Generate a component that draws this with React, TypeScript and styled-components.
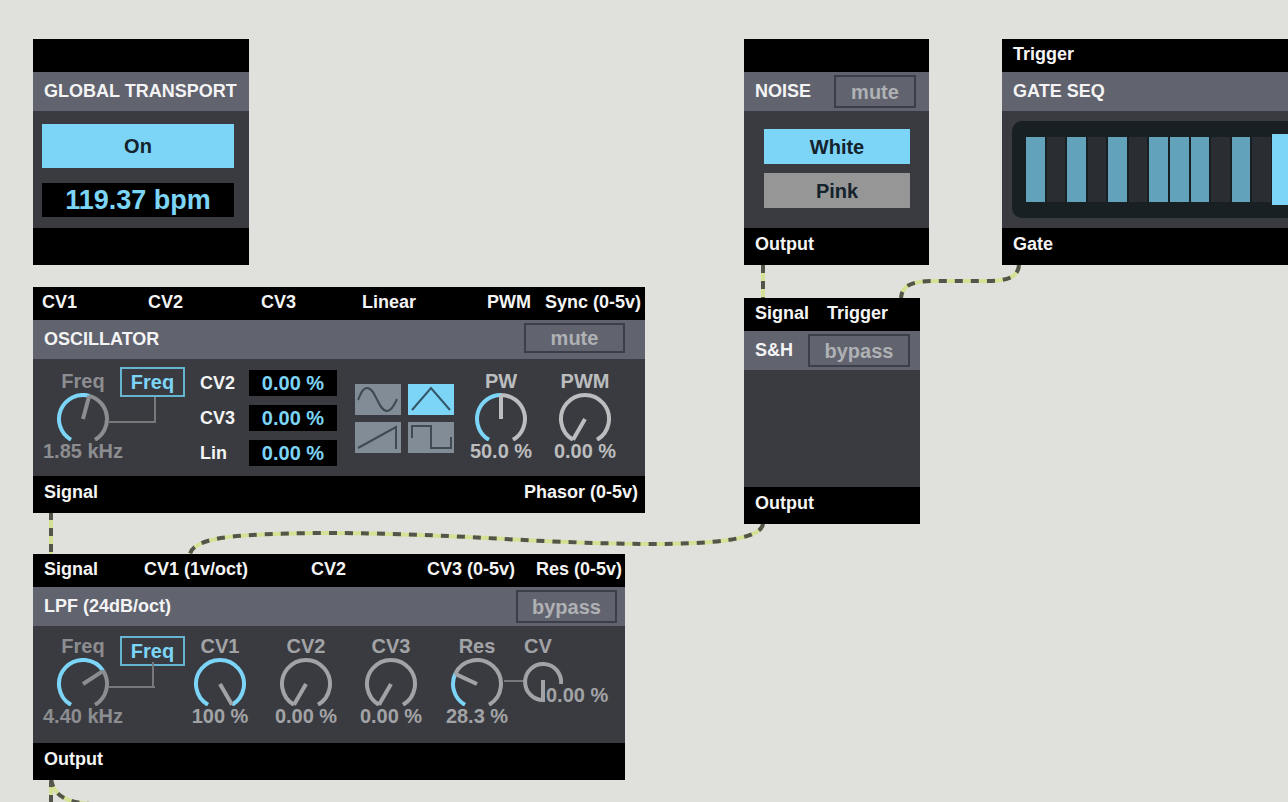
import React, { useId, useState } from 'react';
import styled, { createGlobalStyle } from 'styled-components';

const color = {
  canvas: '#e0e1dc',
  black: '#000000',
  title: '#61636f',
  body: '#3a3b40',
  accent: '#7cd4f6',
  white: '#f4f4f4',
  outline: '#3c3e4a',
  buttonText: '#afb1b4',
};

const GlobalStyle = createGlobalStyle`
  *, *::before, *::after { box-sizing: border-box; }
  body {
    margin: 0;
    background: ${color.canvas};
    font-family: "Liberation Sans", Arial, Helvetica, sans-serif;
    font-weight: 700;
    font-size: 18px;
  }
  button, input { font: inherit; margin: 0; padding: 0; border-radius: 0; }
  button { cursor: pointer; }
`;

/* ---------- canvas and modules ---------- */

const Canvas = styled.main`
  position: relative;
  min-height: 100vh;
  overflow: hidden;
  background: ${color.canvas};
`;

const Cables = styled.svg`
  position: absolute;
  inset: 0;
  width: 100%;
  height: 100%;
  fill: none;
`;

const Module = styled.section<{ $x: number; $y: number; $width: number }>`
  position: absolute;
  left: ${(p) => p.$x}px;
  top: ${(p) => p.$y}px;
  width: ${(p) => p.$width}px;
  display: grid;
  grid-template-rows: 33px 39px 117px 37px;
  background: ${color.body};
  color: ${color.white};
`;

const Inputs = styled.header<{ $columns?: string; $inset?: number }>`
  display: grid;
  grid-template-columns: ${(p) => p.$columns ?? 'auto'};
  padding-left: ${(p) => p.$inset ?? 11}px;
  background: ${color.black};
  line-height: 31px;
  white-space: nowrap;
`;

const Outputs = styled.footer`
  display: flex;
  justify-content: space-between;
  padding: 0 7px 0 11px;
  background: ${color.black};
  line-height: 32px;
  white-space: nowrap;
`;

const TitleBar = styled.div<{ $end?: number }>`
  display: flex;
  justify-content: space-between;
  padding: 3px ${(p) => p.$end ?? 8}px 0 11px;
  background: ${color.title};
`;

const Title = styled.h2`
  margin: 0;
  font-size: 18px;
  line-height: 33px;
  white-space: nowrap;
`;

const TitleButton = styled.button<{ $width: number; $height?: number }>`
  width: ${(p) => p.$width}px;
  height: ${(p) => p.$height ?? 33}px;
  border: 2px solid ${color.outline};
  background: transparent;
  color: ${color.buttonText};
  font-size: 20px;
  line-height: 20px;
`;

const StackBody = styled.div<{ $pad: string; $gap: number }>`
  display: flex;
  flex-direction: column;
  gap: ${(p) => p.$gap}px;
  padding: ${(p) => p.$pad};
`;

const ControlBody = styled.div<{ $columns: string }>`
  display: grid;
  grid-template-columns: ${(p) => p.$columns};
  align-items: start;
  padding: 8px 0 0 23px;
`;

const FlatButton = styled.button<{ $on?: boolean; $height: number }>`
  height: ${(p) => p.$height}px;
  border: 0;
  background: ${(p) => (p.$on ? color.accent : '#969696')};
  color: #14222c;
  font-size: 20px;
  line-height: 20px;
`;

const TempoField = styled.input`
  width: 100%;
  height: 34px;
  border: 0;
  background: ${color.black};
  color: ${color.accent};
  font-size: 27px;
  text-align: center;
`;

/* ---------- knobs ---------- */

const KnobCell = styled.div<{ $drop: number; $tone: string }>`
  display: flex;
  flex-direction: column;
  align-items: center;
  width: 54px;
  padding-top: ${(p) => p.$drop}px;
  color: ${(p) => p.$tone};
  font-size: 20px;
  line-height: 20px;
  white-space: nowrap;
`;

const Dial = styled.div`
  position: relative;
  height: 48px;
  margin-top: 2px;
`;

const DialDrawing = styled.svg`
  display: block;
  fill: none;
  stroke-width: 4;
`;

const DialInput = styled.input`
  position: absolute;
  inset: 0;
  width: 100%;
  height: 100%;
  opacity: 0;
`;

function arc(cx: number, cy: number, r: number, from: number, to: number) {
  const at = (deg: number) => {
    const a = (deg * Math.PI) / 180;
    return `${cx + r * Math.sin(a)} ${cy - r * Math.cos(a)}`;
  };
  const large = to - from > 180 ? 1 : 0;
  return `M${at(from)} A${r} ${r} 0 ${large} 1 ${at(to)}`;
}

type KnobProps = { name: string; text: string; value: number; drop: number; tone: string };

function Knob({ name, text, value, drop, tone }: KnobProps) {
  const id = useId();
  const [level, setLevel] = useState(value);
  const angle = -150 + 300 * level;
  const rad = (angle * Math.PI) / 180;
  return (
    <KnobCell $drop={drop} $tone={tone}>
      <label htmlFor={id}>{name}</label>
      <Dial>
        <DialDrawing width="54" height="48" viewBox="0 0 54 48" stroke={tone} aria-hidden="true">
          <path d={arc(27, 26, 24, angle, 150)} />
          {level > 0 && <path d={arc(27, 26, 24, -150, angle)} stroke={color.accent} />}
          <path d={`M27 26 L${27 + 24 * Math.sin(rad)} ${26 - 24 * Math.cos(rad)}`} />
        </DialDrawing>
        <DialInput
          id={id}
          type="range"
          min={0}
          max={1}
          step={0.001}
          value={level}
          onChange={(e) => setLevel(Number(e.target.value))}
        />
      </Dial>
      <output htmlFor={id}>{text}</output>
    </KnobCell>
  );
}

const LinkCell = styled.div<{ $drop: number }>`
  width: 75px;
  padding-top: ${(p) => p.$drop}px;
`;

const LinkButton = styled.button`
  display: block;
  width: 65px;
  height: 30px;
  margin-left: auto;
  border: 2px solid #64b4d2;
  background: transparent;
  color: ${color.accent};
  font-size: 20px;
  line-height: 20px;
`;

const LinkLine = styled.svg`
  display: block;
  fill: none;
  stroke: #77787c;
  stroke-width: 2;
  overflow: visible;
`;

const SmallKnobCell = styled.div<{ $tone: string }>`
  position: relative;
  padding-top: 2px;
  color: ${(p) => p.$tone};
  font-size: 20px;
  line-height: 20px;
  white-space: nowrap;
`;

const SmallKnobName = styled.label`
  display: block;
  padding-left: 20px;
`;

const SmallKnobValue = styled.output`
  position: absolute;
  left: 42px;
  top: 51px;
`;

/* ---------- oscillator ---------- */

const AmountGrid = styled.div`
  display: grid;
  grid-template-columns: 49px 88px;
  row-gap: 9px;
  padding-top: 3px;
  line-height: 26px;
`;

const AmountField = styled.input`
  width: 88px;
  height: 26px;
  border: 0;
  background: ${color.black};
  color: ${color.accent};
  font-size: 20px;
  text-align: center;
`;

const WaveGrid = styled.div`
  display: grid;
  grid-template-columns: 46px 46px;
  gap: 7px;
  padding-top: 17px;
`;

const WaveButton = styled.button<{ $on: boolean }>`
  height: 31px;
  border: 0;
  background: ${(p) => (p.$on ? color.accent : '#818c96')};
  svg {
    display: block;
    fill: none;
    stroke: ${(p) => (p.$on ? '#335668' : '#3f4a52')};
    stroke-width: 2;
  }
`;

const waves = [
  { name: 'Sine', d: 'M3 16 C6 9 8 4 12 4 C21 4 23 27 32 27 C36 27 39 22 42 15' },
  { name: 'Triangle', d: 'M4 26 L23 4 L42 26' },
  { name: 'Saw', d: 'M3 26 L41 5 V27' },
  { name: 'Square', d: 'M4 16 V4 H23 V26 H43 V15' },
];

function AmountRow({ name }: { name: string }) {
  const id = useId();
  return (
    <>
      <label htmlFor={id}>{name}</label>
      <AmountField id={id} defaultValue="0.00 %" />
    </>
  );
}

/* ---------- gate sequencer ---------- */

const StepPanel = styled.div`
  display: grid;
  grid-template-columns: repeat(16, 1fr);
  column-gap: 2px;
  height: 97px;
  margin: 10px 11px 0 10px;
  padding: 16px 14px;
  border-radius: 10px;
  background: #192024;
`;

const Step = styled.input<{ $current: boolean }>`
  appearance: none;
  margin: ${(p) => (p.$current ? '-3px -1px' : '0')};
  background: #2a2d32;
  &:checked {
    background: ${(p) => (p.$current ? color.accent : '#62a3bb')};
  }
`;

const activeSteps = [0, 2, 4, 6, 7, 8, 10, 12];
const currentStep = 12;

/* ---------- cables ---------- */

const cablePaths = [
  'M51 512 V554',
  'M763 265 V298',
  'M763 524 C761 540 710 544 650 544 C520 543 460 533 320 533 C230 534 194 538 190 554',
  'M1019 265 C1018 279 1004 281 985 281 H935 C912 281 902 285 901 298',
  'M51 779 V810',
  'M51 779 C54 796 66 802 90 804 H255',
];

const tones = { dim: '#8c8d90', mid: '#a2a3a6', bright: '#bcbdbf' };

export default function App() {
  const [wave, setWave] = useState('Triangle');
  const [noise, setNoise] = useState('White');

  return (
    <>
      <GlobalStyle />
      <Canvas>
        <Cables aria-hidden="true">
          {cablePaths.map((d) => (
            <g key={d}>
              <path d={d} stroke="#d5e296" strokeWidth="4" />
              <path d={d} stroke="#53554a" strokeWidth="4" strokeDasharray="8 8" />
            </g>
          ))}
        </Cables>

        <Module $x={33} $y={39} $width={216}>
          <Inputs />
          <TitleBar>
            <Title>GLOBAL TRANSPORT</Title>
          </TitleBar>
          <StackBody $pad="13px 15px 0 9px" $gap={15}>
            <FlatButton $on $height={44}>On</FlatButton>
            <TempoField aria-label="Tempo" defaultValue="119.37 bpm" />
          </StackBody>
          <Outputs />
        </Module>

        <Module $x={744} $y={39} $width={185}>
          <Inputs />
          <TitleBar $end={13}>
            <Title>NOISE</Title>
            <TitleButton $width={82}>mute</TitleButton>
          </TitleBar>
          <StackBody $pad="18px 19px 0 20px" $gap={9}>
            {['White', 'Pink'].map((n) => (
              <FlatButton key={n} $on={noise === n} $height={35} onClick={() => setNoise(n)}>
                {n}
              </FlatButton>
            ))}
          </StackBody>
          <Outputs>
            <span>Output</span>
          </Outputs>
        </Module>

        <Module $x={1002} $y={39} $width={376}>
          <Inputs>
            <span>Trigger</span>
          </Inputs>
          <TitleBar>
            <Title>GATE SEQ</Title>
          </TitleBar>
          <div>
            <StepPanel>
              {Array.from({ length: 16 }, (_, i) => (
                <Step
                  key={i}
                  type="checkbox"
                  aria-label={`Step ${i + 1}`}
                  defaultChecked={activeSteps.includes(i)}
                  $current={i === currentStep}
                />
              ))}
            </StepPanel>
          </div>
          <Outputs>
            <span>Gate</span>
          </Outputs>
        </Module>

        <Module $x={33} $y={287} $width={612}>
          <Inputs $columns="106px 113px 101px 125px 58px auto" $inset={9}>
            <span>CV1</span>
            <span>CV2</span>
            <span>CV3</span>
            <span>Linear</span>
            <span>PWM</span>
            <span>Sync (0-5v)</span>
          </Inputs>
          <TitleBar $end={20}>
            <Title>OSCILLATOR</Title>
            <TitleButton $width={101} $height={30}>mute</TitleButton>
          </TitleBar>
          <ControlBody $columns="54px 90px 155px 119px 84px 54px">
            <Knob name="Freq" text="1.85 kHz" value={0.55} drop={4} tone={tones.dim} />
            <LinkCell $drop={0}>
              <LinkButton>Freq</LinkButton>
              <LinkLine width="75" height="30" aria-hidden="true">
                <path d="M-1 25 H45 V0" />
              </LinkLine>
            </LinkCell>
            <AmountGrid>
              <AmountRow name="CV2" />
              <AmountRow name="CV3" />
              <AmountRow name="Lin" />
            </AmountGrid>
            <WaveGrid>
              {waves.map((w) => (
                <WaveButton
                  key={w.name}
                  aria-label={w.name}
                  $on={wave === w.name}
                  onClick={() => setWave(w.name)}
                >
                  <svg width="46" height="31" aria-hidden="true">
                    <path d={w.d} />
                  </svg>
                </WaveButton>
              ))}
            </WaveGrid>
            <Knob name="PW" text="50.0 %" value={0.5} drop={4} tone={tones.bright} />
            <Knob name="PWM" text="0.00 %" value={0} drop={4} tone={tones.bright} />
          </ControlBody>
          <Outputs>
            <span>Signal</span>
            <span>Phasor (0-5v)</span>
          </Outputs>
        </Module>

        <Module $x={744} $y={298} $width={176}>
          <Inputs $columns="72px auto">
            <span>Signal</span>
            <span>Trigger</span>
          </Inputs>
          <TitleBar $end={10}>
            <Title>S&amp;H</Title>
            <TitleButton $width={102}>bypass</TitleButton>
          </TitleBar>
          <div />
          <Outputs>
            <span>Output</span>
          </Outputs>
        </Module>

        <Module $x={33} $y={554} $width={592}>
          <Inputs $columns="100px 167px 116px 109px auto">
            <span>Signal</span>
            <span>CV1 (1v/oct)</span>
            <span>CV2</span>
            <span>CV3 (0-5v)</span>
            <span>Res (0-5v)</span>
          </Inputs>
          <TitleBar>
            <Title>LPF (24dB/oct)</Title>
            <TitleButton $width={101}>bypass</TitleButton>
          </TitleBar>
          <ControlBody $columns="54px 83px 86px 85px 86px 54px auto">
            <Knob name="Freq" text="4.40 kHz" value={0.69} drop={2} tone={tones.dim} />
            <LinkCell $drop={2}>
              <LinkButton>Freq</LinkButton>
              <LinkLine width="75" height="30" aria-hidden="true">
                <path d="M-1 21 H45 M43 21 V-4" />
              </LinkLine>
            </LinkCell>
            <Knob name="CV1" text="100 %" value={1} drop={2} tone={tones.mid} />
            <Knob name="CV2" text="0.00 %" value={0} drop={2} tone={tones.mid} />
            <Knob name="CV3" text="0.00 %" value={0} drop={2} tone={tones.mid} />
            <Knob name="Res" text="28.3 %" value={0.283} drop={2} tone={tones.mid} />
            <SmallKnobCell $tone={tones.mid}>
              <SmallKnobName htmlFor="res-cv">CV</SmallKnobName>
              <Dial>
                <DialDrawing width="62" height="48" stroke={tones.mid} aria-hidden="true">
                  <path d="M-1 23 H20" strokeWidth="2" stroke="#77787c" />
                  <path d="M40 42 A18 18 0 1 1 57 26" />
                  <path d="M39 22 V44" />
                </DialDrawing>
                <DialInput id="res-cv" type="range" min={0} max={1} step={0.001} defaultValue={0} />
              </Dial>
              <SmallKnobValue htmlFor="res-cv">0.00 %</SmallKnobValue>
            </SmallKnobCell>
          </ControlBody>
          <Outputs>
            <span>Output</span>
          </Outputs>
        </Module>
      </Canvas>
    </>
  );
}
